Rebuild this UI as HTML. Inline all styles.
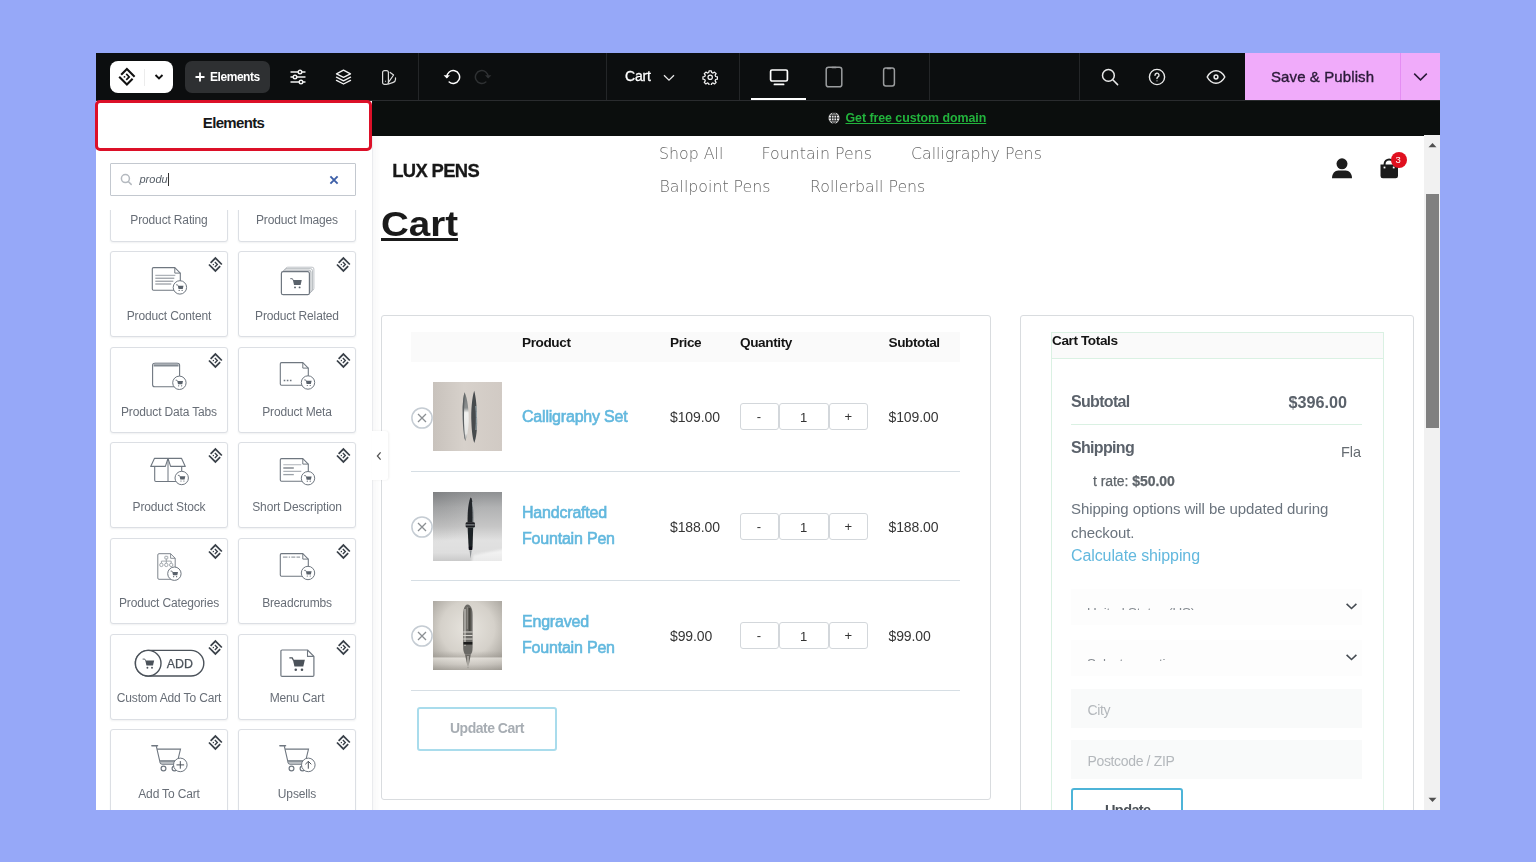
<!DOCTYPE html>
<html lang="en">
<head>
<meta charset="utf-8">
<title>Cart – Elements</title>
<style>
*{box-sizing:border-box;margin:0;padding:0}
html,body{width:1536px;height:862px;overflow:hidden}
body{background:#96a8f8;font-family:"Liberation Sans",sans-serif;position:relative;color:#222}
.abs{position:absolute}
.t{position:absolute;white-space:nowrap;line-height:1}
#win{opacity:.999;position:absolute;left:96px;top:53px;width:1344px;height:757px;background:#fff;overflow:hidden}
#pc{position:absolute;left:-96px;top:-53px;width:0;height:0}
#topbar{position:absolute;left:0;top:0;width:1344px;height:48px;background:#0c0e0f;border-bottom:1px solid #2a2c2e}
.vsep{position:absolute;top:0;width:1px;height:47px;background:#242628}
#panel{position:absolute;left:0;top:48px;width:277px;height:709px;background:#fff;border-right:1px solid #f1f2f4}
.card{position:absolute;width:118px;height:85.6px;background:#fff;border:1px solid #dcdfe4;border-radius:3px;box-shadow:0 1px 2px rgba(40,50,70,.07)}
.cl{width:118px;text-align:center;font-size:12px;color:#686e77;letter-spacing:-0.15px}
.nav{font-family:"DejaVu Sans","Liberation Sans",sans-serif;font-weight:200;font-size:15.8px;color:#666}
.th{font-size:13.6px;font-weight:bold;color:#141414;letter-spacing:-0.4px}
.tot{font-size:16px;font-weight:bold;color:#5b626b;letter-spacing:-0.68px}
.sh{font-size:15px;color:#6b747e;letter-spacing:-0.1px}
.ph{font-size:14px;color:#b4b8bc;letter-spacing:-0.35px}
.pn{font-size:16px;color:#62b8de;-webkit-text-stroke:0.6px #62b8de;letter-spacing:-0.2px}
.pr{font-size:14px;color:#363636;letter-spacing:-0.1px}
.qb{position:absolute;height:27px;border:1px solid #d3d7db;border-radius:3px;background:#fff}
.qt{font-size:13px;color:#333}
.sep{position:absolute;left:411px;width:549px;height:1px;background:#d6dee4}
#ov{opacity:.999;position:absolute;left:0;top:0;width:0;height:0}
</style>
</head>
<body>
<div id="win">
  <div id="topbar">
    <!-- logo pill -->
    <div class="abs" style="left:14px;top:8px;width:63px;height:32px;background:#fff;border-radius:8px"></div>
    <svg class="abs" style="left:20px;top:13px" width="22" height="22" viewBox="0 0 22 22"><g fill="none" stroke="#111" stroke-linecap="butt" stroke-linejoin="miter"><path d="M5.18 8.82L10.9 3.1L18.6 10.8" stroke-width="2.09"/><path d="M3.2 10.8L10.9 18.5L16.62 12.78" stroke-width="2.09"/><path d="M10.24 7.94L13.21 10.91L10.24 13.88" stroke-width="1.65"/></g><rect x="7.71" y="10.09" width="1.54" height="1.54" fill="#111"/></svg>
    <div class="abs" style="left:48px;top:16px;width:1px;height:17px;background:#ececec"></div>
    <svg class="abs" style="left:57.5px;top:20px" width="10" height="8" viewBox="0 0 10 8" fill="none" stroke="#111" stroke-width="1.9"><path d="M1.5 2 L5 5.5 L8.5 2"/></svg>
    <!-- + Elements -->
    <div class="abs" style="left:89px;top:8px;width:85px;height:32px;background:#2e3032;border-radius:7px"></div>
    <svg class="abs" style="left:99px;top:19px" width="10" height="10" viewBox="0 0 10 10" stroke="#fff" stroke-width="1.8"><path d="M5 0.5V9.5M0.5 5H9.5"/></svg>
    <span class="t" id="tb-el" style="left:114px;top:18px;font-size:12px;font-weight:bold;color:#fff;letter-spacing:-0.45px">Elements</span>
    <!-- sliders -->
    <svg class="abs" style="left:194px;top:16px" width="16" height="16" viewBox="0 0 16 16" fill="none" stroke="#f2f2f2" stroke-width="1.4" stroke-linecap="round">
      <path d="M1 3H8.2M11.8 3H15M1 8H3.2M6.8 8H15M1 13H9.2M12.8 13H15"/>
      <circle cx="10" cy="3" r="1.8"/><circle cx="5" cy="8" r="1.8"/><circle cx="11" cy="13" r="1.8"/>
    </svg>
    <!-- layers -->
    <svg class="abs" style="left:239px;top:16px" width="17" height="16" viewBox="0 0 17 16" fill="none" stroke="#f2f2f2" stroke-width="1.4" stroke-linejoin="round" stroke-linecap="round">
      <path d="M8.5 1.2 L15.5 4.8 L8.5 8.4 L1.5 4.8 Z"/>
      <path d="M1.5 8.2 L8.5 11.8 L15.5 8.2"/>
      <path d="M1.5 11.4 L8.5 15 L15.5 11.4"/>
    </svg>
    <!-- style -->
    <svg class="abs" style="left:285px;top:16px" width="16" height="17" viewBox="0 0 16 17" fill="none" stroke="#dcdcdc" stroke-width="1.2" stroke-linejoin="round" stroke-linecap="round">
      <rect x="1.6" y="1.6" width="5.800" height="13.800" rx="1.900"/>
      <path d="M9.200 3.400 L12.600 6 L7.800 12.800"/>
      <path d="M14.500 8.800 V10.600 Q14.500 12.600 12.300 13.400 L7.600 15"/>
      <path d="M4.500 11.200 L5.200 12.700 H3.800 Z" fill="#dcdcdc" stroke="none"/>
    </svg>
    <div class="vsep" style="left:322px"></div>
    <!-- undo -->
    <svg class="abs" style="left:347px;top:16px" width="18" height="16" viewBox="0 0 18 16" fill="none" stroke="#fff" stroke-width="1.5" stroke-linecap="round">
      <path d="M3.8 8 A6.4 6.4 0 1 1 6.2 13"/>
      <path d="M0.6 6.2 L3.8 9.6 L7 6.2 Z" fill="#fff" stroke="none"/>
    </svg>
    <!-- redo -->
    <svg class="abs" style="left:378px;top:16px" width="18" height="16" viewBox="0 0 18 16" fill="none" stroke="#2f3133" stroke-width="1.5" stroke-linecap="round">
      <path d="M14.2 8 A6.4 6.4 0 1 0 11.8 13"/>
      <path d="M17.4 6.2 L14.2 9.6 L11 6.2 Z" fill="#2f3133" stroke="none"/>
    </svg>
    <div class="vsep" style="left:510px"></div>
    <span class="t" id="tb-cart" style="left:529px;top:16px;font-size:14px;color:#fff;-webkit-text-stroke:0.3px #fff;letter-spacing:-0.2px">Cart</span>
    <svg class="abs" style="left:567px;top:21px" width="12" height="8" viewBox="0 0 12 8" fill="none" stroke="#e8e8e8" stroke-width="1.3"><path d="M1 1.2 L6 6.2 L11 1.2"/></svg>
    <!-- gear -->
    <svg class="abs" style="left:605.8px;top:15.8px" width="16.4" height="16.4" viewBox="0 0 24 24" fill="none" stroke="#f2f2f2" stroke-width="1.8" stroke-linejoin="round">
      <path d="M10.3 2.5h3.4l.5 2.6 1.9.8 2.2-1.5 2.4 2.4-1.5 2.2.8 1.9 2.6.5v3.4l-2.6.5-.8 1.9 1.5 2.2-2.4 2.4-2.2-1.5-1.9.8-.5 2.6h-3.4l-.5-2.6-1.9-.8-2.2 1.5-2.4-2.4 1.5-2.2-.8-1.9-2.6-.5v-3.4l2.6-.5.8-1.9-1.5-2.2 2.4-2.4 2.2 1.5 1.9-.8z" transform="translate(0 .1)"/>
      <circle cx="12" cy="12.1" r="3.2"/>
    </svg>
    <div class="vsep" style="left:643px"></div>
    <!-- desktop -->
    <svg class="abs" style="left:673px;top:15px" width="20" height="18" viewBox="0 0 20 18" fill="none" stroke="#fff" stroke-width="1.7" stroke-linejoin="round" stroke-linecap="round">
      <rect x="1.6" y="2" width="16.8" height="11" rx="1.4"/>
      <path d="M5.4 16.4H14.6"/>
    </svg>
    <div class="abs" style="left:655px;top:45px;width:55px;height:2px;background:#fff"></div>
    <!-- tablet -->
    <svg class="abs" style="left:729px;top:13px" width="18" height="22" viewBox="0 0 18 22" fill="none" stroke="#9b9d9f" stroke-width="1.5" stroke-linejoin="round" stroke-linecap="round">
      <rect x="1.2" y="1.2" width="15.6" height="19.6" rx="2.4"/>
      <path d="M7 1.6H11"/>
    </svg>
    <!-- phone -->
    <svg class="abs" style="left:786px;top:14px" width="14" height="20" viewBox="0 0 14 20" fill="none" stroke="#9b9d9f" stroke-width="1.5" stroke-linejoin="round" stroke-linecap="round">
      <rect x="1.6" y="1" width="10.8" height="18" rx="2.2"/>
      <path d="M5.4 1.4H8.6"/>
    </svg>
    <div class="vsep" style="left:833px"></div>
    <div class="vsep" style="left:983px"></div>
    <!-- search -->
    <svg class="abs" style="left:1005px;top:15px" width="18" height="18" viewBox="0 0 18 18" fill="none" stroke="#e9e9e9" stroke-width="1.5" stroke-linecap="round">
      <circle cx="7.4" cy="7.4" r="5.9"/>
      <path d="M11.8 11.8 L16.6 16.6"/>
    </svg>
    <!-- help -->
    <svg class="abs" style="left:1052px;top:15px" width="18" height="18" viewBox="0 0 18 18" fill="none" stroke="#e9e9e9" stroke-width="1.4" stroke-linecap="round">
      <circle cx="9" cy="9" r="7.6"/>
      <path d="M7 7.2 a2 2 0 1 1 3 1.7 c-.7 .4 -1 .8 -1 1.6"/>
      <circle cx="9" cy="12.8" r=".6" fill="#e9e9e9" stroke="none"/>
    </svg>
    <!-- eye -->
    <svg class="abs" style="left:1110px;top:16px" width="20" height="16" viewBox="0 0 20 16" fill="none" stroke="#e9e9e9" stroke-width="1.5" stroke-linejoin="round">
      <path d="M1.2 8 C3.4 3.8 6.4 1.8 10 1.8 S16.6 3.8 18.8 8 C16.6 12.2 13.6 14.2 10 14.2 S3.4 12.2 1.2 8Z"/>
      <circle cx="10" cy="8" r="1.9"/>
    </svg>
    <!-- publish -->
    <div class="abs" style="left:1149px;top:0;width:195px;height:47px;background:#f0abfa"></div>
    <div class="abs" style="left:1304px;top:0;width:1px;height:47px;background:#e48df3"></div>
    <span class="t" id="tb-pub" style="left:1175px;top:16px;font-size:15px;color:#2a1a38;-webkit-text-stroke:0.35px #2a1a38;letter-spacing:0.1px">Save &amp; Publish</span>
    <svg class="abs" style="left:1317px;top:19px" width="15" height="10" viewBox="0 0 15 10" fill="none" stroke="#2a1a38" stroke-width="1.5"><path d="M1.2 1.6 L7.5 7.9 L13.8 1.6"/></svg>
  </div>

  <div id="panel"></div>
  <div id="pc">
<div class="abs" style="left:372px;top:101px;width:1068px;height:34.5px;background:#0b0e0d"></div>
<svg class="abs" style="left:828px;top:112.3px" width="12" height="12" viewBox="0 0 12 12" fill="none" stroke="#0b0e0d" stroke-width="0.8"><circle cx="6" cy="6" r="5.5" fill="#ececec" stroke="none"/><path d="M6 .5V11.5M.5 6H11.5M1.6 3.2H10.4M1.6 8.8H10.4"/><ellipse cx="6" cy="6" rx="2.6" ry="5.5"/></svg>
<span class="t" id="bn" style="left:845.5px;top:112.3px;font-size:12.4px;font-weight:bold;color:#22b33c;text-decoration:underline;text-underline-offset:0.6px;text-decoration-thickness:1px;letter-spacing:-0.05px">Get free custom domain</span>

<!-- ===== site header ===== -->
<span class="t" id="lux" style="left:392.3px;top:161.7px;font-size:18.4px;font-weight:bold;color:#181818;-webkit-text-stroke:0.3px #181818;letter-spacing:-0.66px">LUX PENS</span>
<span class="t nav" style="left:659px;top:145.7px">Shop All</span>
<span class="t nav" style="left:761.5px;top:145.7px">Fountain Pens</span>
<span class="t nav" style="left:911px;top:145.7px">Calligraphy Pens</span>
<span class="t nav" style="left:659.5px;top:179.2px">Ballpoint Pens</span>
<span class="t nav" style="left:810px;top:179.2px">Rollerball Pens</span>
<svg class="abs" style="left:1331px;top:157px" width="22" height="22" viewBox="0 0 22 22" fill="#1c1c1c"><circle cx="11" cy="6.8" r="5.5"/><path d="M1 21.3c0-5 3-7.8 6.2-7.8h7.6c3.200 0 6.200 2.800 6.200 7.800z"/></svg>
<svg class="abs" style="left:1378px;top:156px" width="24" height="24" viewBox="0 0 24 24"><path d="M6.600 9.500V8a4.600 4.600 0 0 1 9.200 0v1.500" fill="none" stroke="#1c1c1c" stroke-width="2"/><path d="M2.500 8.600h17.500v11.300a2.400 2.400 0 0 1-2.400 2.400h-12.700a2.400 2.400 0 0 1-2.400-2.400z" fill="#1c1c1c"/><rect x="5.600" y="10.600" width="1.800" height="1.800" fill="#fff"/><rect x="14.800" y="10.600" width="1.800" height="1.800" fill="#fff"/></svg>
<div class="abs" style="left:1390.500px;top:151.500px;width:16px;height:16px;border-radius:8px;background:#e0101f"></div>
<span class="t" style="left:1395.600px;top:155px;font-size:9.500px;color:#fff">3</span>
<span class="t" id="h1" style="left:381px;top:206.2px;font-size:35px;font-weight:bold;color:#1a1a1a;transform:scaleX(1.102);transform-origin:0 0">Cart</span>
<div class="abs" style="left:381px;top:238.4px;width:77px;height:2.6px;background:#1a1a1a"></div>

<!-- ===== cart table card ===== -->
<div class="abs" style="left:381px;top:315px;width:609.500px;height:485px;border:1px solid #d9dcdf;border-radius:3px;background:#fff"></div>
<div class="abs" style="left:411px;top:332px;width:549px;height:30px;background:#fafafa"></div>
<span class="t th" style="left:522px;top:336px">Product</span>
<span class="t th" style="left:670px;top:336px">Price</span>
<span class="t th" style="left:740px;top:336px">Quantity</span>
<span class="t th" style="left:888.500px;top:336px">Subtotal</span>
<svg class="abs" style="left:410px;top:405.6px" width="24" height="24" viewBox="0 0 24 24" fill="none"><circle cx="12" cy="12" r="10.1" stroke="#c5ccd3" stroke-width="1.5" fill="#fff"/><path d="M8 8L16 16M16 8L8 16" stroke="#8b8f93" stroke-width="1.3"/></svg>
<svg class="abs" style="left:433px;top:382px" width="69" height="69" viewBox="0 0 69 69"><linearGradient id="g1" x1="0" x2="1" y1="0" y2="0"><stop offset="0" stop-color="#c8c2bc"/><stop offset=".45" stop-color="#d7d1cb"/><stop offset="1" stop-color="#d1cac4"/></linearGradient><linearGradient id="g1p" x1="0" x2="0" y1="0" y2="1"><stop offset="0" stop-color="#6e7273"/><stop offset=".32" stop-color="#8d9090"/><stop offset=".42" stop-color="#f1f1ef"/><stop offset=".85" stop-color="#e4e4e2"/><stop offset="1" stop-color="#777a7b"/></linearGradient><filter id="b1" x="-20%" y="-5%" width="140%" height="110%"><feGaussianBlur stdDeviation="0.45"/></filter><rect width="69" height="69" fill="url(#g1)"/><g filter="url(#b1)"><path d="M31.600 10.200C29.600 17 29.200 30 29.900 42C30.300 50 31.200 55.500 32.300 59C34 54.500 35.400 47.500 35.700 40C36 28 34.600 17 31.600 10.200Z" fill="url(#g1p)"/><path d="M31.600 10.200C29.600 17 29.200 30 29.900 42C30.300 50 31.200 55.500 32.300 59C31.600 51 31 44 31 36C31 26 31.600 18 31.600 10.200Z" fill="#5b6062"/><path d="M41.200 8.700C38.900 16 38 28 38.400 40C38.700 50 39.800 57 41.300 61C43.200 56 44.300 48 44.100 38C43.900 26 43.200 16 41.200 8.700Z" fill="#464b4e"/><path d="M42.900 24C43.500 31 43.500 40 43 48" stroke="#a9bac0" stroke-width="0.900" fill="none"/></g></svg>
<span class="t pn" style="left:522px;top:408.8px">Calligraphy Set</span>
<span class="t pr" style="left:670px;top:410.0px">$109.00</span>
<span class="t pr" style="left:888.5px;top:410.0px">$109.00</span>
<div class="qb" style="left:739.5px;top:403px;width:39px"></div>
<div class="qb" style="left:779px;top:403px;width:49.5px"></div>
<div class="qb" style="left:829px;top:403px;width:39px"></div>
<span class="t qt" style="left:756.8px;top:410px">-</span>
<span class="t qt" style="left:800px;top:411px">1</span>
<span class="t qt" style="left:844.6px;top:410px">+</span>
<div class="sep" style="top:471px"></div>
<svg class="abs" style="left:410px;top:515.1px" width="24" height="24" viewBox="0 0 24 24" fill="none"><circle cx="12" cy="12" r="10.1" stroke="#c5ccd3" stroke-width="1.5" fill="#fff"/><path d="M8 8L16 16M16 8L8 16" stroke="#8b8f93" stroke-width="1.3"/></svg>
<svg class="abs" style="left:433px;top:492px" width="69" height="69" viewBox="0 0 69 69"><linearGradient id="g2" x1="0" x2="0" y1="0" y2="1"><stop offset="0" stop-color="#8e9092"/><stop offset=".22" stop-color="#b1b2b3"/><stop offset=".5" stop-color="#c6c6c6"/><stop offset=".7" stop-color="#e1e1e1"/><stop offset=".88" stop-color="#dedede"/><stop offset="1" stop-color="#c9c9c9"/></linearGradient><radialGradient id="g2h" cx="0" cy="0" r=".75"><stop offset="0" stop-color="#66686a" stop-opacity=".4"/><stop offset="1" stop-color="#8a8a8a" stop-opacity="0"/></radialGradient><filter id="b2w" x="-10%" y="-40%" width="120%" height="180%"><feGaussianBlur stdDeviation="1.2"/></filter><filter id="b2" x="-20%" y="-5%" width="140%" height="110%"><feGaussianBlur stdDeviation="0.35"/></filter><rect width="69" height="69" fill="url(#g2)"/><rect width="69" height="69" fill="url(#g2h)"/><path d="M40 63L72 57V72H38Z" fill="#fff" opacity=".6" filter="url(#b2w)"/><g filter="url(#b2)"><path d="M37.400 5.500C35.200 11 34.400 21 34.600 30.500H40.300C40.500 21 40 11.500 38.600 6.200Z" fill="#23272b"/><path d="M39.400 10C40 17 40.200 24 40 30" stroke="#aab0b4" stroke-width="0.800" fill="none"/><rect x="32.700" y="30.300" width="9.200" height="5.200" rx="1.200" fill="#1c1f22"/><path d="M33 32.900H41.600" stroke="#b8bcc0" stroke-width="0.800"/><path d="M34.600 35.500H40.200L39.600 55H35.600Z" fill="#1f2326"/><rect x="35.700" y="54.500" width="3.700" height="3.600" rx=".8" fill="#0f1113"/><path d="M36.500 58.200L37.600 66.500L38.700 58.200Z" fill="#8c8f92"/></g></svg>
<span class="t pn" style="left:522px;top:505.3px">Handcrafted</span>
<span class="t pn" style="left:522px;top:531.1px">Fountain Pen</span>
<span class="t pr" style="left:670px;top:519.5px">$188.00</span>
<span class="t pr" style="left:888.5px;top:519.5px">$188.00</span>
<div class="qb" style="left:739.5px;top:513px;width:39px"></div>
<div class="qb" style="left:779px;top:513px;width:49.5px"></div>
<div class="qb" style="left:829px;top:513px;width:39px"></div>
<span class="t qt" style="left:756.8px;top:520px">-</span>
<span class="t qt" style="left:800px;top:521px">1</span>
<span class="t qt" style="left:844.6px;top:520px">+</span>
<div class="sep" style="top:580px"></div>
<svg class="abs" style="left:410px;top:624.1px" width="24" height="24" viewBox="0 0 24 24" fill="none"><circle cx="12" cy="12" r="10.1" stroke="#c5ccd3" stroke-width="1.5" fill="#fff"/><path d="M8 8L16 16M16 8L8 16" stroke="#8b8f93" stroke-width="1.3"/></svg>
<svg class="abs" style="left:433px;top:601px" width="69" height="69" viewBox="0 0 69 69"><radialGradient id="g3" cx=".5" cy=".4" r=".78"><stop offset="0" stop-color="#e7e4de"/><stop offset=".5" stop-color="#d5d1ca"/><stop offset="1" stop-color="#95918a"/></radialGradient><linearGradient id="g3b" x1="0" x2="0" y1="0" y2="1"><stop offset="0" stop-color="#8f8b84" stop-opacity=".0"/><stop offset=".3" stop-color="#8f8b84" stop-opacity=".35"/><stop offset=".36" stop-color="#e9e6e0" stop-opacity=".75"/><stop offset=".7" stop-color="#dcd8d2" stop-opacity=".5"/><stop offset="1" stop-color="#a5a19a" stop-opacity=".5"/></linearGradient><filter id="b3" x="-20%" y="-5%" width="140%" height="110%"><feGaussianBlur stdDeviation="0.4"/></filter><rect width="69" height="69" fill="url(#g3)"/><rect y="50" width="69" height="19" fill="url(#g3b)"/><g filter="url(#b3)"><path d="M34.500 3.500C31.500 4 30.200 8 30.200 14V47C30.200 50 31 52 32 53.500H37.800C39.200 51.500 39.600 49.500 39.600 46.500V14C39.600 8 38 4 34.500 3.500Z" fill="#6b6965"/><path d="M32 8V45" stroke="#b3b1ac" stroke-width="1.600"/><path d="M36.600 7V30" stroke="#45443f" stroke-width="2"/><path d="M34.300 6V28" stroke="#8f8d88" stroke-width="1"/><path d="M30.200 31H39.600M30.200 34.500H39.600M30.200 38H39.600" stroke="#dad7d1" stroke-width="1.100"/><rect x="30.500" y="41" width="8.800" height="2.600" fill="#1e1e1d"/><path d="M32 53.500H37.800L36.400 61L35 67.500L33.600 61Z" fill="#6a6863"/><path d="M35 55V66" stroke="#d5d2cc" stroke-width="1.100"/></g></svg>
<span class="t pn" style="left:522px;top:614.3000000000001px">Engraved</span>
<span class="t pn" style="left:522px;top:640.1px">Fountain Pen</span>
<span class="t pr" style="left:670px;top:628.5px">$99.00</span>
<span class="t pr" style="left:888.5px;top:628.5px">$99.00</span>
<div class="qb" style="left:739.5px;top:622px;width:39px"></div>
<div class="qb" style="left:779px;top:622px;width:49.5px"></div>
<div class="qb" style="left:829px;top:622px;width:39px"></div>
<span class="t qt" style="left:756.8px;top:629px">-</span>
<span class="t qt" style="left:800px;top:630px">1</span>
<span class="t qt" style="left:844.6px;top:629px">+</span>
<div class="sep" style="top:690px"></div>
<div class="abs" style="left:416.500px;top:706.500px;width:140.500px;height:44.500px;border:2px solid #a9dcec;border-radius:3px;background:#fff"></div>
<span class="t" id="upd" style="left:450px;top:721px;font-size:14px;font-weight:bold;color:#a7adb3;letter-spacing:-0.5px">Update Cart</span>

<!-- ===== cart totals card ===== -->
<div class="abs" style="left:1020px;top:315px;width:394px;height:520px;border:1px solid #d9dcdf;border-radius:3px;background:#fff"></div>
<div class="abs" style="left:1051px;top:332px;width:333px;height:500px;border:1px solid #daf1e3;background:#fff"></div>
<div class="abs" style="left:1052px;top:333px;width:331px;height:26px;background:#fafafa;border-bottom:1px solid #daf1e3"></div>
<span class="t th" id="ct" style="left:1052px;top:334px">Cart Totals</span>
<span class="t tot" style="left:1071px;top:394.4px">Subtotal</span>
<span class="t tot" id="sum" style="left:1288.500px;top:393.500px;letter-spacing:0;font-size:16.2px">$396.00</span>
<div class="abs" style="left:1071px;top:423.500px;width:291px;height:1px;background:#daf1e3"></div>
<span class="t tot" style="left:1071px;top:440.3px">Shipping</span>
<span class="t" style="left:1341px;top:445px;font-size:14.500px;color:#666c72">Fla</span>
<span class="t" id="rate" style="left:1093px;top:474.2px;font-size:14px;color:#5f656b;-webkit-text-stroke:0.25px #5f656b;letter-spacing:-0.05px">t rate: <b>$50.00</b></span>
<span class="t sh" id="sh1" style="left:1071px;top:501.4px">Shipping options will be updated during</span>
<span class="t sh" style="left:1071px;top:524.6px">checkout.</span>
<span class="t" id="calc" style="left:1071px;top:548px;font-size:16px;color:#62b8de;letter-spacing:-0.1px">Calculate shipping</span>
<!-- selects -->
<div class="abs" style="left:1071px;top:589px;width:291px;height:36px;background:#fdfdfd"></div>
<div class="abs" style="left:1087px;top:603px;width:120px;height:6.500px;overflow:hidden"><span class="t" style="left:0;top:2.5px;font-size:13.4px;color:#858b91;letter-spacing:-0.2px">United States (US)</span></div>
<svg class="abs" style="left:1344.500px;top:602px" width="13" height="9" viewBox="0 0 13 9" fill="none" stroke="#454b52" stroke-width="1.600"><path d="M1.600 1.800L6.500 6.500L11.400 1.800"/></svg>
<div class="abs" style="left:1071px;top:640px;width:291px;height:36px;background:#fdfdfd"></div>
<div class="abs" style="left:1087px;top:654px;width:120px;height:6.500px;overflow:hidden"><span class="t" style="left:0;top:3.1px;font-size:13.4px;color:#858b91;letter-spacing:-0.2px">Select an option…</span></div>
<svg class="abs" style="left:1344.500px;top:653px" width="13" height="9" viewBox="0 0 13 9" fill="none" stroke="#454b52" stroke-width="1.600"><path d="M1.600 1.800L6.500 6.500L11.400 1.800"/></svg>
<!-- inputs -->
<div class="abs" style="left:1071px;top:689px;width:291px;height:39px;background:#f9fafa"></div>
<span class="t ph" style="left:1087.5px;top:703px">City</span>
<div class="abs" style="left:1071px;top:740px;width:291px;height:39px;background:#f9fafa"></div>
<span class="t ph" id="zip" style="left:1087.5px;top:754px">Postcode / ZIP</span>
<div class="abs" style="left:1071px;top:788px;width:111.500px;height:44px;border:2px solid #4db4d8;border-radius:3px;background:#fff"></div>
<span class="t" style="left:1105px;top:802.5px;font-size:14.5px;font-weight:bold;color:#4d5359;letter-spacing:-0.6px">Update</span>

<!-- ===== scrollbar ===== -->
<div class="abs" style="left:1424px;top:135px;width:16px;height:675px;background:#f1f1f1"></div>
<svg class="abs" style="left:1428px;top:142px" width="9" height="6" viewBox="0 0 9 6"><path d="M0.500 5.200L4.500 1L8.500 5.200Z" fill="#505050"/></svg>
<div class="abs" style="left:1426px;top:194px;width:13px;height:234px;background:#808080"></div>
<svg class="abs" style="left:1428px;top:797px" width="9" height="6" viewBox="0 0 9 6"><path d="M0.500 0.800L4.500 5L8.500 0.800Z" fill="#505050"/></svg>

<div class="abs" style="left:110px;top:163px;width:246px;height:33px;border:1px solid #c3c8cf;border-radius:1px;background:#fff"></div>
<svg class="abs" style="left:120px;top:173px" width="13" height="13" viewBox="0 0 13 13" fill="none" stroke="#b4b9bf" stroke-width="1.5" stroke-linecap="round"><circle cx="5.4" cy="5.6" r="4"/><path d="M8.5 8.7L11.2 11.4"/></svg>
<span class="t" id="srch" style="left:139.5px;top:173.5px;font-size:11px;font-style:italic;color:#555d66">produ</span>
<div class="abs" style="left:168px;top:173px;width:1px;height:13px;background:#333"></div>
<svg class="abs" style="left:329px;top:175px" width="10" height="10" viewBox="0 0 10 10" stroke="#3d5fa8" stroke-width="1.9"><path d="M1.4 1.4L8.6 8.6M8.6 1.4L1.4 8.6"/></svg>
<div class="abs" style="left:96px;top:210px;width:276px;height:600px;overflow:hidden"><div class="abs" style="left:-96px;top:-210px">
<div class="card" style="left:110px;top:156px"></div>
<span class="t cl" style="left:110px;top:214.4px">Product Rating</span>
<div class="card" style="left:238px;top:156px"></div>
<span class="t cl" style="left:238px;top:214.4px">Product Images</span>
<div class="card" style="left:110px;top:251px"></div>
<span class="t cl" style="left:110px;top:310px">Product Content</span>
<svg class="abs" style="left:139.0px;top:263px" width="60" height="36" viewBox="0 0 60 36"><path d="M14.5 4.6H35.8L41.3 10.1V26.000000000000004Q41.3 27.200000000000003 40.099999999999994 27.200000000000003H14.5Q13.3 27.200000000000003 13.3 26.000000000000004V5.8Q13.3 4.6 14.5 4.6Z" fill="#fff" stroke="#6f7780" stroke-width="1.1" stroke-linejoin="round"/><path d="M35.8 4.6V10.1H41.3" fill="none" stroke="#6f7780" stroke-width="0.9900000000000001" stroke-linejoin="round"/><path d="M16.3 12.399999999999999H36.3" stroke="#aeb3b9" stroke-width="1.3"/><path d="M16.3 15.2H35.3M16.3 18.2H34.3M16.3 21.0H32.3" stroke="#6f7780" stroke-width="0.9"/><circle cx="40.900000000000006" cy="24.4" r="6.7" fill="#fff" stroke="#6f7780" stroke-width="1"/><path d="M37.1 21.79H38.47L39.0 22.85" fill="none" stroke="#5a626b" stroke-width="0.8"/><path d="M38.79 22.64H44.5L43.76 25.92H39.53Z" fill="#5a626b"/><circle cx="40.17" cy="27.4" r="0.61" fill="#5a626b"/><circle cx="43.13" cy="27.4" r="0.61" fill="#5a626b"/></svg>
<svg class="abs" style="left:206px;top:255px" width="20" height="20" viewBox="0 0 20 20"><g fill="none" stroke="#3a4149" stroke-linecap="butt" stroke-linejoin="miter"><path d="M4.62 7.84L9.4 3.06L15.84 9.5" stroke-width="1.75"/><path d="M2.96 9.5L9.4 15.94L14.18 11.16" stroke-width="1.75"/><path d="M8.85 7.11L11.33 9.59L8.85 12.08" stroke-width="1.38"/></g><rect x="6.73" y="8.9" width="1.29" height="1.29" fill="#3a4149"/></svg>
<div class="card" style="left:238px;top:251px"></div>
<span class="t cl" style="left:238px;top:310px">Product Related</span>
<svg class="abs" style="left:267.0px;top:263px" width="60" height="36" viewBox="0 0 60 36"><rect x="18.9" y="4.199999999999999" width="28" height="23" rx="1.8" fill="#fff" stroke="#a3a9af" stroke-width="0.7"/><rect x="17.4" y="5.699999999999999" width="28" height="23" rx="1.8" fill="#fff" stroke="#979da4" stroke-width="0.7"/><rect x="15.9" y="7.199999999999999" width="28" height="23" rx="1.8" fill="#fff" stroke="#8a9198" stroke-width="0.7"/><rect x="14.4" y="8.7" width="28" height="23" rx="1.8" fill="#fff" stroke="#6f7780" stroke-width="1.2"/><path d="M23.25 15.68H25.39L26.21 17.32" fill="none" stroke="#5a626b" stroke-width="0.9"/><path d="M25.88 17.0H34.75L33.6 22.09H27.03Z" fill="#5a626b"/><circle cx="28.01" cy="24.39" r="0.94" fill="#5a626b"/><circle cx="32.61" cy="24.39" r="0.94" fill="#5a626b"/></svg>
<svg class="abs" style="left:334px;top:255px" width="20" height="20" viewBox="0 0 20 20"><g fill="none" stroke="#3a4149" stroke-linecap="butt" stroke-linejoin="miter"><path d="M4.62 7.84L9.4 3.06L15.84 9.5" stroke-width="1.75"/><path d="M2.96 9.5L9.4 15.94L14.18 11.16" stroke-width="1.75"/><path d="M8.85 7.11L11.33 9.59L8.85 12.08" stroke-width="1.38"/></g><rect x="6.73" y="8.9" width="1.29" height="1.29" fill="#3a4149"/></svg>
<div class="card" style="left:110px;top:347px"></div>
<span class="t cl" style="left:110px;top:405.6px">Product Data Tabs</span>
<svg class="abs" style="left:139.0px;top:359px" width="60" height="36" viewBox="0 0 60 36"><rect x="13.6" y="4.2" width="27" height="23.5" rx="2" fill="#fff" stroke="#6f7780" stroke-width="1.1"/><path d="M16.0 4.4H38.2" stroke="#9aa0a7" stroke-width="1.2"/><path d="M14.6 6.4H39.6" stroke="#838a92" stroke-width="2.2"/><circle cx="40.4" cy="23.8" r="6.7" fill="#fff" stroke="#6f7780" stroke-width="1"/><path d="M36.6 21.19H37.97L38.5 22.25" fill="none" stroke="#5a626b" stroke-width="0.8"/><path d="M38.29 22.04H44.0L43.26 25.32H39.03Z" fill="#5a626b"/><circle cx="39.67" cy="26.8" r="0.61" fill="#5a626b"/><circle cx="42.63" cy="26.8" r="0.61" fill="#5a626b"/></svg>
<svg class="abs" style="left:206px;top:351px" width="20" height="20" viewBox="0 0 20 20"><g fill="none" stroke="#3a4149" stroke-linecap="butt" stroke-linejoin="miter"><path d="M4.62 7.84L9.4 3.06L15.84 9.5" stroke-width="1.75"/><path d="M2.96 9.5L9.4 15.94L14.18 11.16" stroke-width="1.75"/><path d="M8.85 7.11L11.33 9.59L8.85 12.08" stroke-width="1.38"/></g><rect x="6.73" y="8.9" width="1.29" height="1.29" fill="#3a4149"/></svg>
<div class="card" style="left:238px;top:347px"></div>
<span class="t cl" style="left:238px;top:405.6px">Product Meta</span>
<svg class="abs" style="left:267.0px;top:359px" width="60" height="36" viewBox="0 0 60 36"><path d="M14.5 3.6H35.8L41.3 9.1V25.000000000000004Q41.3 26.200000000000003 40.099999999999994 26.200000000000003H14.5Q13.3 26.200000000000003 13.3 25.000000000000004V4.8Q13.3 3.6 14.5 3.6Z" fill="#fff" stroke="#6f7780" stroke-width="1.1" stroke-linejoin="round"/><path d="M35.8 3.6V9.1H41.3" fill="none" stroke="#6f7780" stroke-width="0.9900000000000001" stroke-linejoin="round"/><path d="M16.7 21.6h1.6m1.5 0h1.6m1.5 0h1.6" stroke="#6f7780" stroke-width="1.5"/><circle cx="41.0" cy="23.5" r="6.7" fill="#fff" stroke="#6f7780" stroke-width="1"/><path d="M37.2 20.89H38.57L39.1 21.95" fill="none" stroke="#5a626b" stroke-width="0.8"/><path d="M38.89 21.74H44.6L43.86 25.02H39.63Z" fill="#5a626b"/><circle cx="40.27" cy="26.5" r="0.61" fill="#5a626b"/><circle cx="43.23" cy="26.5" r="0.61" fill="#5a626b"/></svg>
<svg class="abs" style="left:334px;top:351px" width="20" height="20" viewBox="0 0 20 20"><g fill="none" stroke="#3a4149" stroke-linecap="butt" stroke-linejoin="miter"><path d="M4.62 7.84L9.4 3.06L15.84 9.5" stroke-width="1.75"/><path d="M2.96 9.5L9.4 15.94L14.18 11.16" stroke-width="1.75"/><path d="M8.85 7.11L11.33 9.59L8.85 12.08" stroke-width="1.38"/></g><rect x="6.73" y="8.9" width="1.29" height="1.29" fill="#3a4149"/></svg>
<div class="card" style="left:110px;top:442px"></div>
<span class="t cl" style="left:110px;top:501.1px">Product Stock</span>
<svg class="abs" style="left:139.0px;top:454px" width="60" height="36" viewBox="0 0 60 36"><path d="M15.7 12.4V26.3Q15.7 27.5 16.9 27.5H41.5Q42.7 27.5 42.7 26.3V12.4" fill="#fff" stroke="#6f7780" stroke-width="1.1"/><path d="M29 4.4L26.4 12.4H11.7L15.4 4.4H42.6L46.3 12.4H31.6Z" fill="#fff" stroke="#6f7780" stroke-width="1.1" stroke-linejoin="round"/><path d="M29 5V27.5" stroke="#6f7780" stroke-width="1"/><circle cx="42.7" cy="24" r="6.7" fill="#fff" stroke="#6f7780" stroke-width="1"/><path d="M38.9 21.39H40.27L40.8 22.45" fill="none" stroke="#5a626b" stroke-width="0.8"/><path d="M40.59 22.24H46.3L45.56 25.52H41.33Z" fill="#5a626b"/><circle cx="41.97" cy="27.0" r="0.61" fill="#5a626b"/><circle cx="44.93" cy="27.0" r="0.61" fill="#5a626b"/></svg>
<svg class="abs" style="left:206px;top:446px" width="20" height="20" viewBox="0 0 20 20"><g fill="none" stroke="#3a4149" stroke-linecap="butt" stroke-linejoin="miter"><path d="M4.62 7.84L9.4 3.06L15.84 9.5" stroke-width="1.75"/><path d="M2.96 9.5L9.4 15.94L14.18 11.16" stroke-width="1.75"/><path d="M8.85 7.11L11.33 9.59L8.85 12.08" stroke-width="1.38"/></g><rect x="6.73" y="8.9" width="1.29" height="1.29" fill="#3a4149"/></svg>
<div class="card" style="left:238px;top:442px"></div>
<span class="t cl" style="left:238px;top:501.1px">Short Description</span>
<svg class="abs" style="left:267.0px;top:454px" width="60" height="36" viewBox="0 0 60 36"><path d="M14.5 4.6H35.8L41.3 10.1V26.000000000000004Q41.3 27.200000000000003 40.099999999999994 27.200000000000003H14.5Q13.3 27.200000000000003 13.3 26.000000000000004V5.8Q13.3 4.6 14.5 4.6Z" fill="#fff" stroke="#6f7780" stroke-width="1.1" stroke-linejoin="round"/><path d="M35.8 4.6V10.1H41.3" fill="none" stroke="#6f7780" stroke-width="0.9900000000000001" stroke-linejoin="round"/><path d="M16.3 10.8H34.3M16.3 17.4H34.3" stroke="#aeb3b9" stroke-width="1.1"/><path d="M16.3 14.0H26.8" stroke="#5a626b" stroke-width="1.1"/><path d="M16.3 20.6H26.8" stroke="#9aa0a7" stroke-width="1.3"/><circle cx="41.0" cy="24.200000000000003" r="6.7" fill="#fff" stroke="#6f7780" stroke-width="1"/><path d="M37.2 21.59H38.57L39.1 22.65" fill="none" stroke="#5a626b" stroke-width="0.8"/><path d="M38.89 22.44H44.6L43.86 25.72H39.63Z" fill="#5a626b"/><circle cx="40.27" cy="27.2" r="0.61" fill="#5a626b"/><circle cx="43.23" cy="27.2" r="0.61" fill="#5a626b"/></svg>
<svg class="abs" style="left:334px;top:446px" width="20" height="20" viewBox="0 0 20 20"><g fill="none" stroke="#3a4149" stroke-linecap="butt" stroke-linejoin="miter"><path d="M4.62 7.84L9.4 3.06L15.84 9.5" stroke-width="1.75"/><path d="M2.96 9.5L9.4 15.94L14.18 11.16" stroke-width="1.75"/><path d="M8.85 7.11L11.33 9.59L8.85 12.08" stroke-width="1.38"/></g><rect x="6.73" y="8.9" width="1.29" height="1.29" fill="#3a4149"/></svg>
<div class="card" style="left:110px;top:538px"></div>
<span class="t cl" style="left:110px;top:596.6px">Product Categories</span>
<svg class="abs" style="left:139.0px;top:550px" width="60" height="36" viewBox="0 0 60 36"><path d="M20.0 3.7H31.6L36.2 8.3V28.1Q36.2 29.3 35.0 29.3H20.0Q18.8 29.3 18.8 28.1V4.9Q18.8 3.7 20.0 3.7Z" fill="#fff" stroke="#6f7780" stroke-width="0.9" stroke-linejoin="round"/><path d="M31.6 3.7V8.3H36.2" fill="none" stroke="#6f7780" stroke-width="0.81" stroke-linejoin="round"/><g fill="none" stroke="#8d949b" stroke-width="0.8"><rect x="25.8" y="6.300000000000001" width="3" height="2.6" rx=".5"/><path d="M27.3 8.9V11.100000000000001M22.400000000000002 13.100000000000001V11.100000000000001H32.2V13.100000000000001M27.3 11.100000000000001V13.100000000000001"/><circle cx="22.400000000000002" cy="14.899999999999999" r="1.7"/><circle cx="27.3" cy="14.899999999999999" r="1.7"/><circle cx="32.2" cy="14.899999999999999" r="1.7"/></g><circle cx="35.400000000000006" cy="23.7" r="6.7" fill="#fff" stroke="#6f7780" stroke-width="1"/><path d="M31.6 21.09H32.97L33.5 22.15" fill="none" stroke="#5a626b" stroke-width="0.8"/><path d="M33.29 21.94H39.0L38.26 25.22H34.03Z" fill="#5a626b"/><circle cx="34.67" cy="26.7" r="0.61" fill="#5a626b"/><circle cx="37.63" cy="26.7" r="0.61" fill="#5a626b"/></svg>
<svg class="abs" style="left:206px;top:542px" width="20" height="20" viewBox="0 0 20 20"><g fill="none" stroke="#3a4149" stroke-linecap="butt" stroke-linejoin="miter"><path d="M4.62 7.84L9.4 3.06L15.84 9.5" stroke-width="1.75"/><path d="M2.96 9.5L9.4 15.94L14.18 11.16" stroke-width="1.75"/><path d="M8.85 7.11L11.33 9.59L8.85 12.08" stroke-width="1.38"/></g><rect x="6.73" y="8.9" width="1.29" height="1.29" fill="#3a4149"/></svg>
<div class="card" style="left:238px;top:538px"></div>
<span class="t cl" style="left:238px;top:596.6px">Breadcrumbs</span>
<svg class="abs" style="left:267.0px;top:550px" width="60" height="36" viewBox="0 0 60 36"><path d="M14.5 3.6H35.8L41.3 9.1V25.000000000000004Q41.3 26.200000000000003 40.099999999999994 26.200000000000003H14.5Q13.3 26.200000000000003 13.3 25.000000000000004V4.8Q13.3 3.6 14.5 3.6Z" fill="#fff" stroke="#6f7780" stroke-width="1.1" stroke-linejoin="round"/><path d="M35.8 3.6V9.1H41.3" fill="none" stroke="#6f7780" stroke-width="0.9900000000000001" stroke-linejoin="round"/><path d="M15.9 7.2h4.6m1.2 0h1.4m1.2 0h4m1.2 0h3.6" stroke="#9aa0a7" stroke-width="1.3"/><circle cx="41.0" cy="23.0" r="6.7" fill="#fff" stroke="#6f7780" stroke-width="1"/><path d="M37.2 20.39H38.57L39.1 21.45" fill="none" stroke="#5a626b" stroke-width="0.8"/><path d="M38.89 21.24H44.6L43.86 24.52H39.63Z" fill="#5a626b"/><circle cx="40.27" cy="26.0" r="0.61" fill="#5a626b"/><circle cx="43.23" cy="26.0" r="0.61" fill="#5a626b"/></svg>
<svg class="abs" style="left:334px;top:542px" width="20" height="20" viewBox="0 0 20 20"><g fill="none" stroke="#3a4149" stroke-linecap="butt" stroke-linejoin="miter"><path d="M4.62 7.84L9.4 3.06L15.84 9.5" stroke-width="1.75"/><path d="M2.96 9.5L9.4 15.94L14.18 11.16" stroke-width="1.75"/><path d="M8.85 7.11L11.33 9.59L8.85 12.08" stroke-width="1.38"/></g><rect x="6.73" y="8.9" width="1.29" height="1.29" fill="#3a4149"/></svg>
<div class="card" style="left:110px;top:634px"></div>
<span class="t cl" style="left:110px;top:692.1px">Custom Add To Cart</span>
<svg class="abs" style="left:129.0px;top:646px" width="80" height="36" viewBox="0 0 80 36"><rect x="6.4" y="4.4" width="68.4" height="25.6" rx="12.8" fill="#fff" stroke="#4b525a" stroke-width="1.4"/><circle cx="19.2" cy="17.2" r="12.8" fill="#fff" stroke="#4b525a" stroke-width="1.4"/><path d="M13.65 13.08H15.79L16.61 14.73" fill="none" stroke="#4b525a" stroke-width="0.9"/><path d="M16.28 14.4H25.15L24.0 19.49H17.43Z" fill="#4b525a"/><circle cx="18.41" cy="21.79" r="0.94" fill="#4b525a"/><circle cx="23.01" cy="21.79" r="0.94" fill="#4b525a"/><text x="50.8" y="21.6" text-anchor="middle" font-family="Liberation Sans, sans-serif" font-size="12.4" fill="#4b525a" stroke="#4b525a" stroke-width="0.25">ADD</text></svg>
<svg class="abs" style="left:206px;top:638px" width="20" height="20" viewBox="0 0 20 20"><g fill="none" stroke="#3a4149" stroke-linecap="butt" stroke-linejoin="miter"><path d="M4.62 7.84L9.4 3.06L15.84 9.5" stroke-width="1.75"/><path d="M2.96 9.5L9.4 15.94L14.18 11.16" stroke-width="1.75"/><path d="M8.85 7.11L11.33 9.59L8.85 12.08" stroke-width="1.38"/></g><rect x="6.73" y="8.9" width="1.29" height="1.29" fill="#3a4149"/></svg>
<div class="card" style="left:238px;top:634px"></div>
<span class="t cl" style="left:238px;top:692.1px">Menu Cart</span>
<svg class="abs" style="left:267.0px;top:646px" width="60" height="36" viewBox="0 0 60 36"><path d="M15.1 4H40.5L46.9 10.4V29.2Q46.9 30.4 45.699999999999996 30.4H15.1Q13.9 30.4 13.9 29.2V5.2Q13.9 4 15.1 4Z" fill="#fff" stroke="#6f7780" stroke-width="1.2" stroke-linejoin="round"/><path d="M40.5 4V10.4H46.9" fill="none" stroke="#6f7780" stroke-width="1.08" stroke-linejoin="round"/><path d="M22.35 11.91H25.23L26.34 14.12" fill="none" stroke="#4b525a" stroke-width="1.22"/><path d="M25.89 13.68H37.85L36.3 20.55H27.44Z" fill="#4b525a"/><circle cx="28.77" cy="23.65" r="1.27" fill="#4b525a"/><circle cx="34.97" cy="23.65" r="1.27" fill="#4b525a"/></svg>
<svg class="abs" style="left:334px;top:638px" width="20" height="20" viewBox="0 0 20 20"><g fill="none" stroke="#3a4149" stroke-linecap="butt" stroke-linejoin="miter"><path d="M4.62 7.84L9.4 3.06L15.84 9.5" stroke-width="1.75"/><path d="M2.96 9.5L9.4 15.94L14.18 11.16" stroke-width="1.75"/><path d="M8.85 7.11L11.33 9.59L8.85 12.08" stroke-width="1.38"/></g><rect x="6.73" y="8.9" width="1.29" height="1.29" fill="#3a4149"/></svg>
<div class="card" style="left:110px;top:729px"></div>
<span class="t cl" style="left:110px;top:787.6px">Add To Cart</span>
<svg class="abs" style="left:139.0px;top:741px" width="60" height="36" viewBox="0 0 60 36"><path d="M12.9 4.8H18.5" stroke="#6f7780" stroke-width="1.5" stroke-linecap="round"/><path d="M17.3 5.1L21.1 21.700000000000003Q21.5 23.1 22.9 23.1H38.9" fill="none" stroke="#6f7780" stroke-width="1.1"/><path d="M18.1 8.1H41.5L38.3 21.299999999999997" fill="none" stroke="#6f7780" stroke-width="1.1"/><path d="M20.9 20.299999999999997H38.5" stroke="#8d949b" stroke-width="2.6"/><circle cx="24.5" cy="27.5" r="2.4" fill="#fff" stroke="#6f7780" stroke-width="1.2"/><circle cx="35.5" cy="27.5" r="2.4" fill="#fff" stroke="#6f7780" stroke-width="1.2"/><circle cx="41.3" cy="23.9" r="6.8" fill="#fff" stroke="#6f7780" stroke-width="1"/><path d="M41.3 20.1V27.700000000000003M37.5 23.9H45.1" stroke="#4b525a" stroke-width="1"/></svg>
<svg class="abs" style="left:206px;top:733px" width="20" height="20" viewBox="0 0 20 20"><g fill="none" stroke="#3a4149" stroke-linecap="butt" stroke-linejoin="miter"><path d="M4.62 7.84L9.4 3.06L15.84 9.5" stroke-width="1.75"/><path d="M2.96 9.5L9.4 15.94L14.18 11.16" stroke-width="1.75"/><path d="M8.85 7.11L11.33 9.59L8.85 12.08" stroke-width="1.38"/></g><rect x="6.73" y="8.9" width="1.29" height="1.29" fill="#3a4149"/></svg>
<div class="card" style="left:238px;top:729px"></div>
<span class="t cl" style="left:238px;top:787.6px">Upsells</span>
<svg class="abs" style="left:267.0px;top:741px" width="60" height="36" viewBox="0 0 60 36"><path d="M12.9 4.8H18.5" stroke="#6f7780" stroke-width="1.5" stroke-linecap="round"/><path d="M17.3 5.1L21.1 21.700000000000003Q21.5 23.1 22.9 23.1H38.9" fill="none" stroke="#6f7780" stroke-width="1.1"/><path d="M18.1 8.1H41.5L38.3 21.299999999999997" fill="none" stroke="#6f7780" stroke-width="1.1"/><path d="M20.9 20.299999999999997H38.5" stroke="#8d949b" stroke-width="2.6"/><circle cx="24.5" cy="27.5" r="2.4" fill="#fff" stroke="#6f7780" stroke-width="1.2"/><circle cx="35.5" cy="27.5" r="2.4" fill="#fff" stroke="#6f7780" stroke-width="1.2"/><circle cx="41.3" cy="23.9" r="6.8" fill="#fff" stroke="#6f7780" stroke-width="1"/><path d="M41.3 27.700000000000003V20.299999999999997M38.3 23.299999999999997L41.3 20.299999999999997L44.3 23.299999999999997" fill="none" stroke="#4b525a" stroke-width="1"/></svg>
<svg class="abs" style="left:334px;top:733px" width="20" height="20" viewBox="0 0 20 20"><g fill="none" stroke="#3a4149" stroke-linecap="butt" stroke-linejoin="miter"><path d="M4.62 7.84L9.4 3.06L15.84 9.5" stroke-width="1.75"/><path d="M2.96 9.5L9.4 15.94L14.18 11.16" stroke-width="1.75"/><path d="M8.85 7.11L11.33 9.59L8.85 12.08" stroke-width="1.38"/></g><rect x="6.73" y="8.9" width="1.29" height="1.29" fill="#3a4149"/></svg>
</div></div>
  </div>
</div>
<div id="ov">
<!-- collapse handle -->
<div class="abs" style="left:372px;top:135.5px;width:9px;height:674.5px;background:linear-gradient(90deg,rgba(30,40,60,.035),rgba(30,40,60,0))"></div>
<div class="abs" style="left:372px;top:431px;width:15.5px;height:49px;background:#fff;border-radius:0 3px 3px 0;box-shadow:1px 0 3px rgba(0,0,0,.07)"></div>
<svg class="abs" style="left:375.7px;top:451px" width="6" height="10" viewBox="0 0 6 10" fill="none" stroke="#505050" stroke-width="1.250"><path d="M4.600 1.400L1.400 5L4.600 8.600"/></svg>
<!-- Elements tab (highlighted) -->
<div class="abs" style="left:94.8px;top:99.6px;width:277.2px;height:51px;border:3.8px solid #dc1028;border-radius:5px;background:#fff"></div>
<span class="t" id="eltab" style="left:202.8px;top:114.6px;font-size:15px;font-weight:bold;color:#16181a;letter-spacing:-0.66px">Elements</span>

</div>
</body>
</html>
